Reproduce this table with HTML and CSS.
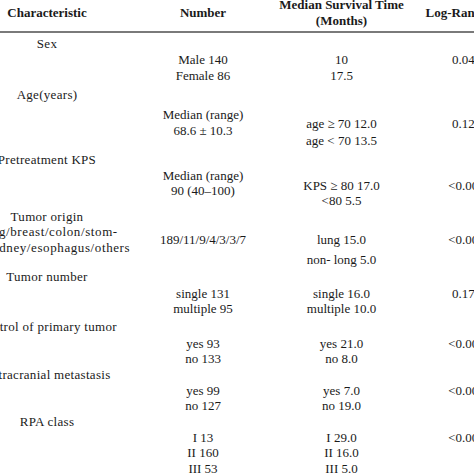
FILE: index.html
```html
<!DOCTYPE html>
<html>
<head>
<meta charset="utf-8">
<link rel="stylesheet" href="styles.css">
</head>
<body>
<div class="sheet">
  <div class="row head">
    <div class="cell"><span class="h-one">Characteristic</span></div>
    <div class="cell"><span class="h-one">Number</span></div>
    <div class="cell"><span>Median Survival Time</span><span>(Months)</span></div>
    <div class="cell"><span class="h-one">Log-Rank Test</span></div>
  </div>

  <div class="group m3">
    <div class="label">Sex</div>
    <div class="row data">
      <div class="cell"></div>
      <div class="cell"><span>Male 140</span><span>Female 86</span></div>
      <div class="cell"><span>10</span><span>17.5</span></div>
      <div class="cell"><span>0.049</span></div>
    </div>
  </div>

  <div class="group m4">
    <div class="label">Age(years)</div>
    <div class="row data">
      <div class="cell"></div>
      <div class="cell p4"><span>Median (range)</span><span>68.6 ± 10.3</span></div>
      <div class="cell p13"><span>age ≥ 70 12.0</span><span class="sep2">age &lt; 70 13.5</span></div>
      <div class="cell p13"><span>0.127</span></div>
    </div>
  </div>

  <div class="group m3">
    <div class="label">Pretreatment KPS</div>
    <div class="row data">
      <div class="cell"></div>
      <div class="cell"><span>Median (range)</span><span>90 (40–100)</span></div>
      <div class="cell p10"><span>KPS ≥ 80 17.0</span><span>&lt;80 5.5</span></div>
      <div class="cell p10"><span>&lt;0.001</span></div>
    </div>
  </div>

  <div class="group">
    <div class="row data">
      <div class="cell origin"><span class="lbl">Tumor origin</span><span class="wide">Lung/breast/colon/stom-</span><span class="wide">ach/kidney/esophagus/others</span></div>
      <div class="cell p23"><span>189/11/9/4/3/3/7</span></div>
      <div class="cell p23"><span>lung 15.0</span><span class="sep4">non- long 5.0</span></div>
      <div class="cell p23"><span>&lt;0.001</span></div>
    </div>
  </div>

  <div class="group m1">
    <div class="label">Tumor number</div>
    <div class="row data">
      <div class="cell"></div>
      <div class="cell p1"><span>single 131</span><span>multiple 95</span></div>
      <div class="cell p1"><span>single 16.0</span><span>multiple 10.0</span></div>
      <div class="cell p1"><span>0.173</span></div>
    </div>
  </div>

  <div class="group m2">
    <div class="label">Control of primary tumor</div>
    <div class="row data">
      <div class="cell"></div>
      <div class="cell p1"><span>yes 93</span><span>no 133</span></div>
      <div class="cell p1"><span>yes 21.0</span><span>no 8.0</span></div>
      <div class="cell p1"><span>&lt;0.001</span></div>
    </div>
  </div>

  <div class="group">
    <div class="label">Extracranial metastasis</div>
    <div class="row data">
      <div class="cell"></div>
      <div class="cell"><span>yes 99</span><span>no 127</span></div>
      <div class="cell"><span>yes 7.0</span><span>no 19.0</span></div>
      <div class="cell"><span>&lt;0.001</span></div>
    </div>
  </div>

  <div class="group">
    <div class="label">RPA class</div>
    <div class="row data">
      <div class="cell"></div>
      <div class="cell"><span>I 13</span><span>II 160</span><span>III 53</span></div>
      <div class="cell"><span>I 29.0</span><span>II 16.0</span><span>III 5.0</span></div>
      <div class="cell"><span>&lt;0.001</span></div>
    </div>
  </div>
</div>
</body>
</html>
```

FILE: styles.css
```css
html, body {
  margin: 0;
  padding: 0;
  background: #ffffff;
}

body {
  width: 474px;
  height: 474px;
  overflow: hidden;
  font-family: "Liberation Serif", "Times New Roman", serif;
  font-size: 13px;
  color: #1a1a1a;
}

.sheet {
  width: 562px;
  margin-left: -31px;
  margin-top: -3px;
}

.row {
  display: grid;
  grid-template-columns: 156px 156px 121px 129px;
}

.cell {
  display: flex;
  flex-direction: column;
  align-items: center;
  white-space: nowrap;
  line-height: 15.5px;
}

.head {
  font-weight: bold;
  padding-bottom: 2px;
  border-bottom: 2px solid #7a7a7a;
}

.head .cell {
  line-height: 16px;
  justify-content: center;
}

.label {
  width: 156px;
  display: flex;
  justify-content: center;
  white-space: nowrap;
  line-height: 16px;
  letter-spacing: 0.3px;
}

.origin .lbl {
  letter-spacing: 0.3px;
}

.origin .wide {
  letter-spacing: 0.6px;
}

.m1 { margin-top: 1.5px; }
.m2 { margin-top: 2px; }
.m3 { margin-top: 3px; }
.m4 { margin-top: 4px; }

.p1 { padding-top: 1px; }
.p4 { padding-top: 4px; }
.p10 { padding-top: 10px; }
.p13 { padding-top: 13px; }
.p23 { padding-top: 23px; }

.sep2 { margin-top: 1.5px; }
.sep4 { margin-top: 4.5px; }
```
